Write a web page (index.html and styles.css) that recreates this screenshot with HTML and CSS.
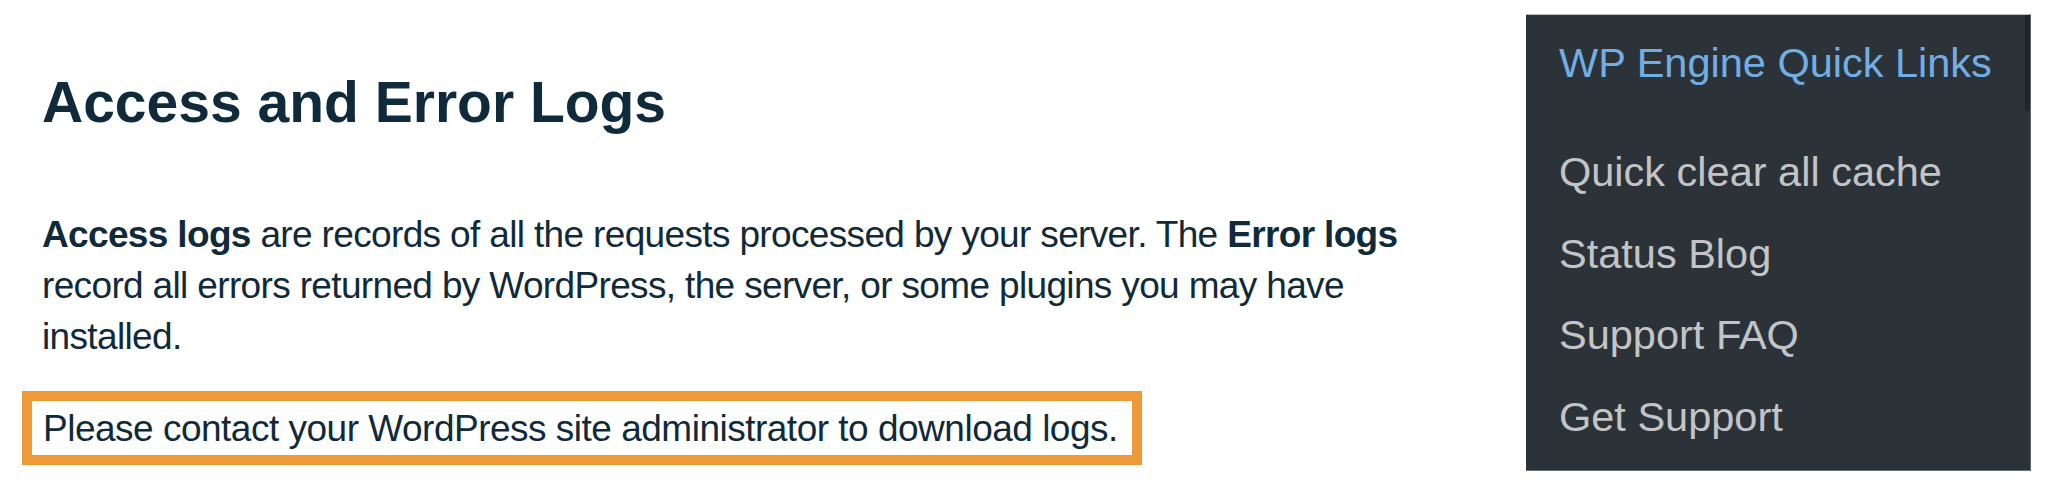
FILE: index.html
```html
<!DOCTYPE html>
<html lang="en">
<head>
<meta charset="utf-8">
<title>Access and Error Logs</title>
<link rel="stylesheet" href="styles.css">
</head>
<body>
<div class="page">
  <main class="content">
    <h1 class="title">Access and Error Logs</h1>
    <p class="intro"><strong>Access logs</strong> are records of all the requests processed by your server. The <strong>Error logs</strong> record all errors returned by WordPress, the server, or some plugins you may have installed.</p>
    <div class="notice">Please contact your WordPress site administrator to download logs.</div>
  </main>
  <aside class="quick-links">
    <div class="ql-title">WP Engine Quick Links</div>
    <ul class="ql-list">
      <li class="ql-item">Quick clear all cache</li>
      <li class="ql-item">Status Blog</li>
      <li class="ql-item">Support FAQ</li>
      <li class="ql-item">Get Support</li>
    </ul>
    <div class="ql-scroll"></div>
  </aside>
</div>
</body>
</html>
```
FILE: styles.css
```css
html, body {
  margin: 0;
  padding: 0;
  background: #ffffff;
}

.page {
  display: flex;
  width: 2048px;
  height: 488px;
  overflow: hidden;
}

.content {
  width: 1526px;
  padding-left: 42px;
  box-sizing: border-box;
  color: #102a3a;
  font-family: "Liberation Sans", Arial, sans-serif;
}

.title {
  margin: 67px 0 0;
  font-weight: 700;
  font-size: 57px;
  line-height: 70px;
  color: #0f2a3b;
}

.intro {
  margin: 72px 0 0;
  width: 1420px;
  font-size: 37px;
  line-height: 51px;
  letter-spacing: -0.65px;
}

.intro strong {
  font-weight: 700;
}

.notice {
  margin: 29px 0 0 -20px;
  width: 1120px;
  box-sizing: border-box;
  border: 10px solid #ef9a39;
  padding: 2px 17px 1px 11px;
  font-size: 37px;
  line-height: 51px;
  letter-spacing: -0.5px;
  white-space: nowrap;
}

.quick-links {
  position: relative;
  margin-top: 14px;
  width: 505px;
  height: 457px;
  box-sizing: border-box;
  background: #2c3338;
  border-top: 1px solid #b9bcbf;
  border-right: 1px solid #5f666c;
  border-bottom: 1px solid #6a7075;
  padding: 23px 0 0 33px;
  font-family: "Liberation Sans", Arial, sans-serif;
  font-size: 41.5px;
}

.ql-title {
  color: #72aee6;
  line-height: 50px;
}

.ql-list {
  list-style: none;
  margin: 43px 0 0;
  padding: 0;
}

.ql-item {
  color: #c3c4c7;
  line-height: 82px;
  height: 81.7px;
}

.ql-scroll {
  position: absolute;
  top: 0;
  right: 0;
  width: 5px;
  height: 96px;
  background: #1f2428;
}
```
